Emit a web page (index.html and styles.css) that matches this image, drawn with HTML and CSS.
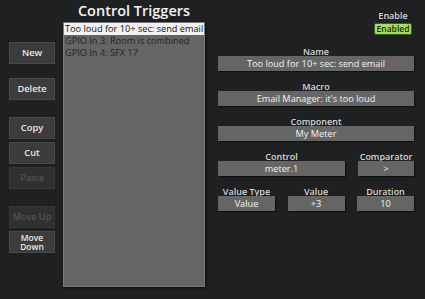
FILE: index.html
```html
<!DOCTYPE html>
<html lang="en">
<head>
    <meta charset="UTF-8">
    <title>Control Triggers</title>
    <link rel="stylesheet" href="styles.css">
</head>
<body>
<div class="page">
    <div class="buttons">
        <div class="btn g1">New</div>
        <div class="btn g2">Delete</div>
        <div class="btn g3">Copy</div>
        <div class="btn">Cut</div>
        <div class="btn off">Paste</div>
        <div class="btn off g3">Move Up</div>
        <div class="btn two"><span>Move</span><span>Down</span></div>
    </div>
    <div class="listcol">
        <div class="title">Control Triggers</div>
        <ul class="list">
            <li class="sel">Too loud for 10+ sec: send email</li>
            <li>GPIO In 3: Room is combined</li>
            <li>GPIO In 4: SFX 17</li>
        </ul>
    </div>
    <div class="props">
        <div class="enable">
            <div class="lbl">Enable</div>
            <div class="badge">Enabled</div>
        </div>
        <div class="field">
            <div class="lbl">Name</div>
            <div class="box">Too loud for 10+ sec: send email</div>
        </div>
        <div class="field">
            <div class="lbl">Macro</div>
            <div class="box">Email Manager: it's too loud</div>
        </div>
        <div class="field">
            <div class="lbl">Component</div>
            <div class="box">My Meter</div>
        </div>
        <div class="row ctl">
            <div class="field">
                <div class="lbl">Control</div>
                <div class="box">meter.1</div>
            </div>
            <div class="field">
                <div class="lbl">Comparator</div>
                <div class="box">&gt;</div>
            </div>
        </div>
        <div class="row vals">
            <div class="field">
                <div class="lbl">Value Type</div>
                <div class="box">Value</div>
            </div>
            <div class="field">
                <div class="lbl">Value</div>
                <div class="box">+3</div>
            </div>
            <div class="field">
                <div class="lbl">Duration</div>
                <div class="box">10</div>
            </div>
        </div>
    </div>
</div>
</body>
</html>
```

FILE: styles.css
```css
*{
    padding: 0;
    margin: 0;
    list-style: none;
    box-sizing: border-box;
}
body{
    background-color: #1f2022;
    font-family: "Open Sans", "DejaVu Sans", sans-serif;
    color: #e8e8e8;
    width: 425px;
    height: 299px;
    overflow: hidden;
}
.page{
    display: flex;
    height: 299px;
}
.buttons{
    width: 63px;
    padding: 42px 0 0 9px;
    display: flex;
    flex-direction: column;
    gap: 3px;
}
.btn{
    width: 46px;
    height: 22px;
    background-color: #3c3c3c;
    border: 1px solid #494949;
    font-size: 9.3px;
    font-weight: 600;
    color: #e8e8e8;
    display: flex;
    flex-direction: column;
    align-items: center;
    justify-content: center;
    text-align: center;
    line-height: 10px;
}
.btn.two{
    font-size: 8.5px;
    line-height: 9.5px;
}
.btn.g2{
    margin-top: 11px;
}
.btn.g3{
    margin-top: 14px;
}
.btn.off{
    background-color: #303030;
    border-color: #383838;
    color: #5c5c5c;
    font-weight: 400;
}
.listcol{
    width: 142px;
    display: flex;
    flex-direction: column;
}
.title{
    height: 22px;
    font-size: 14.5px;
    font-weight: 600;
    text-align: center;
    line-height: 22px;
    color: #f4f4f4;
}
.list{
    height: 265px;
    background-color: #656565;
    border: 1px solid #7a7a7a;
    box-shadow: 1px 1px 2px #0c0c0c;
    padding: 0;
}
.list li{
    height: 12px;
    font-size: 9.2px;
    line-height: 12px;
    padding-left: 1px;
    color: #242424;
    white-space: nowrap;
}
.list li.sel{
    background-color: #f2f2f2;
    color: #111;
}
.props{
    width: 196px;
    margin-left: 13px;
    display: flex;
    flex-direction: column;
    gap: 11px;
}
.enable{
    align-self: flex-end;
    margin-right: 2px;
    margin-bottom: 1px;
    padding-top: 11px;
    display: flex;
    flex-direction: column;
    align-items: center;
    gap: 2px;
}
.lbl{
    font-size: 9px;
    line-height: 9px;
    text-align: center;
    color: #d6d6d6;
    font-weight: 600;
}
.enable .lbl{
    line-height: 10px;
}
.badge{
    width: 38px;
    height: 12px;
    background-color: #a5e05a;
    border: 1px solid #3c5a1c;
    border-radius: 2px;
    color: #1c2a10;
    font-size: 8.5px;
    font-weight: 600;
    line-height: 10px;
    text-align: center;
}
.field{
    display: flex;
    flex-direction: column;
}
.box{
    height: 15px;
    background-color: #656565;
    box-shadow: 1px 1px 1px #111;
    font-size: 9.2px;
    font-weight: 500;
    line-height: 15px;
    text-align: center;
    color: #f2f2f2;
    white-space: nowrap;
}
.row{
    display: flex;
    justify-content: space-between;
}
.ctl .field:first-child{
    width: 127px;
}
.ctl .field:last-child{
    width: 56px;
}
.vals .field{
    width: 57px;
}
```
